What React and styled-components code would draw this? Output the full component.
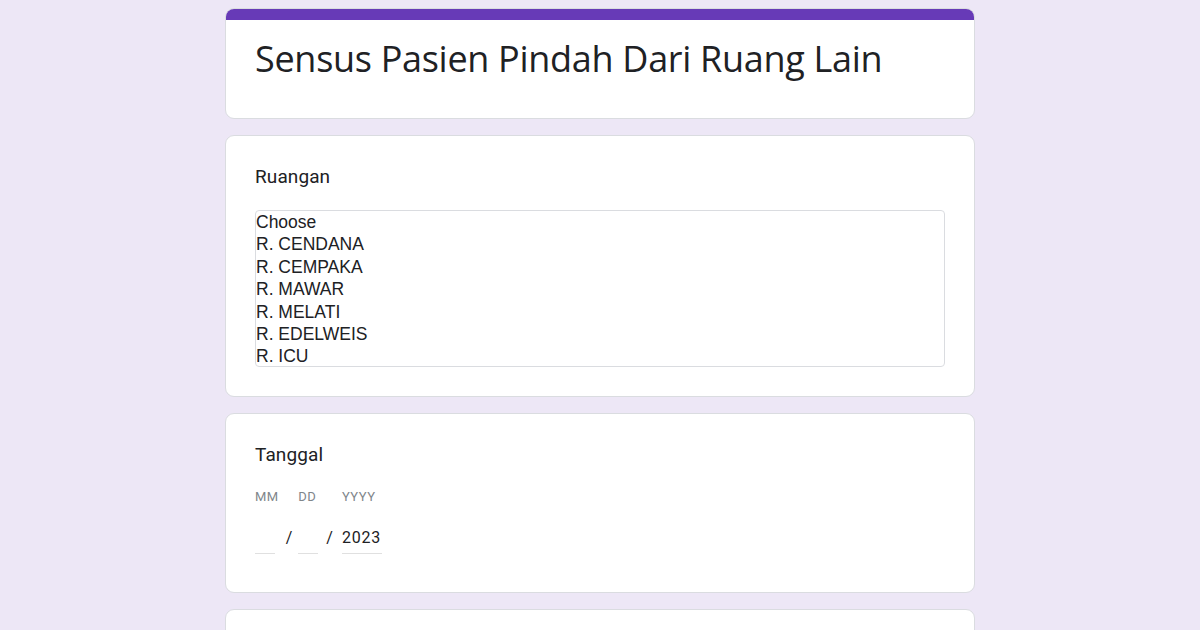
import React from 'react'
import styled, { createGlobalStyle } from 'styled-components'

const rooms = ['Choose', 'R. CENDANA', 'R. CEMPAKA', 'R. MAWAR', 'R. MELATI', 'R. EDELWEIS', 'R. ICU']

const App = () => {
  return (
    <Page>
      <GlobalStyle />
      <Form>
        <Card>
          <TopBar />
          <Title>Sensus Pasien Pindah Dari Ruang Lain</Title>
        </Card>

        <Card pad="29px 29px 29px">
          <Question>Ruangan</Question>
          <ListBox role="listbox">
            {rooms.map(r => (
              <Option key={r} role="option">{r}</Option>
            ))}
          </ListBox>
        </Card>

        <Card pad="29px 29px 38px">
          <Question>Tanggal</Question>
          <DateRow>
            <DatePart>
              <PartLabel>MM</PartLabel>
              <PartInput w="20px" />
            </DatePart>
            <Slash>/</Slash>
            <DatePart>
              <PartLabel>DD</PartLabel>
              <PartInput w="20px" />
            </DatePart>
            <Slash pl="8px" pr="9px">/</Slash>
            <DatePart>
              <PartLabel>YYYY</PartLabel>
              <PartInput w="40px">2023</PartInput>
            </DatePart>
          </DateRow>
        </Card>

        <Card pad="60px 29px" />
      </Form>
    </Page>
  )
}

const GlobalStyle = createGlobalStyle`
  html, body {
    margin: 0;
    padding: 0;
    background: #ede7f6;
    font-family: Roboto, "Liberation Sans", sans-serif;
    color: #202124;
  }
`

const Page = styled.div`
  height: 630px;
  overflow: hidden;
  background: #ede7f6;
  padding-top: 8px;
  box-sizing: border-box;
`

const Form = styled.div`
  width: 750px;
  margin: 0 auto;
  display: flex;
  flex-direction: column;
  gap: 16px;
`

const Card = styled.div`
  background: #fff;
  border: 1px solid #dadce0;
  border-radius: 9px;
  overflow: hidden;
  padding: ${p => p.pad || '0'};
`

const TopBar = styled.div`
  height: 11px;
  background: #673ab7;
`

const Title = styled.div`
  font-family: "Open Sans", Roboto, sans-serif;
  font-size: 36px;
  line-height: 44px;
  letter-spacing: -0.3px;
  padding: 17px 29px 37px;
  color: #202124;
`

const Question = styled.div`
  font-size: 19px;
  line-height: 24px;
  letter-spacing: 0.1px;
  color: #202124;
`

const ListBox = styled.div`
  margin-top: 21px;
  border: 1px solid #dadce0;
  border-radius: 4px;
  height: 155px;
  overflow: hidden;
`

const Option = styled.div`
  font-family: "Liberation Sans", Arial, sans-serif;
  font-size: 17.5px;
  line-height: 22.4px;
  color: #202124;
`

const DateRow = styled.div`
  display: flex;
  align-items: flex-end;
  margin-top: 21px;
`

const DatePart = styled.div`
  display: flex;
  flex-direction: column;
`

const PartLabel = styled.div`
  font-size: 13px;
  line-height: 18px;
  letter-spacing: 0.5px;
  color: #80868b;
  height: 18px;
`

const PartInput = styled.div`
  width: ${p => p.w};
  height: 30px;
  margin-top: 17px;
  border-bottom: 1px solid #e0e0e0;
  font-size: 16px;
  line-height: 30px;
  letter-spacing: 0.8px;
  color: #202124;
`

const Slash = styled.div`
  font-size: 16px;
  line-height: 30px;
  padding: 0 ${p => p.pr || '6px'} 0 ${p => p.pl || '7px'};
  margin-bottom: 1px;
  color: #202124;
`

export default App
